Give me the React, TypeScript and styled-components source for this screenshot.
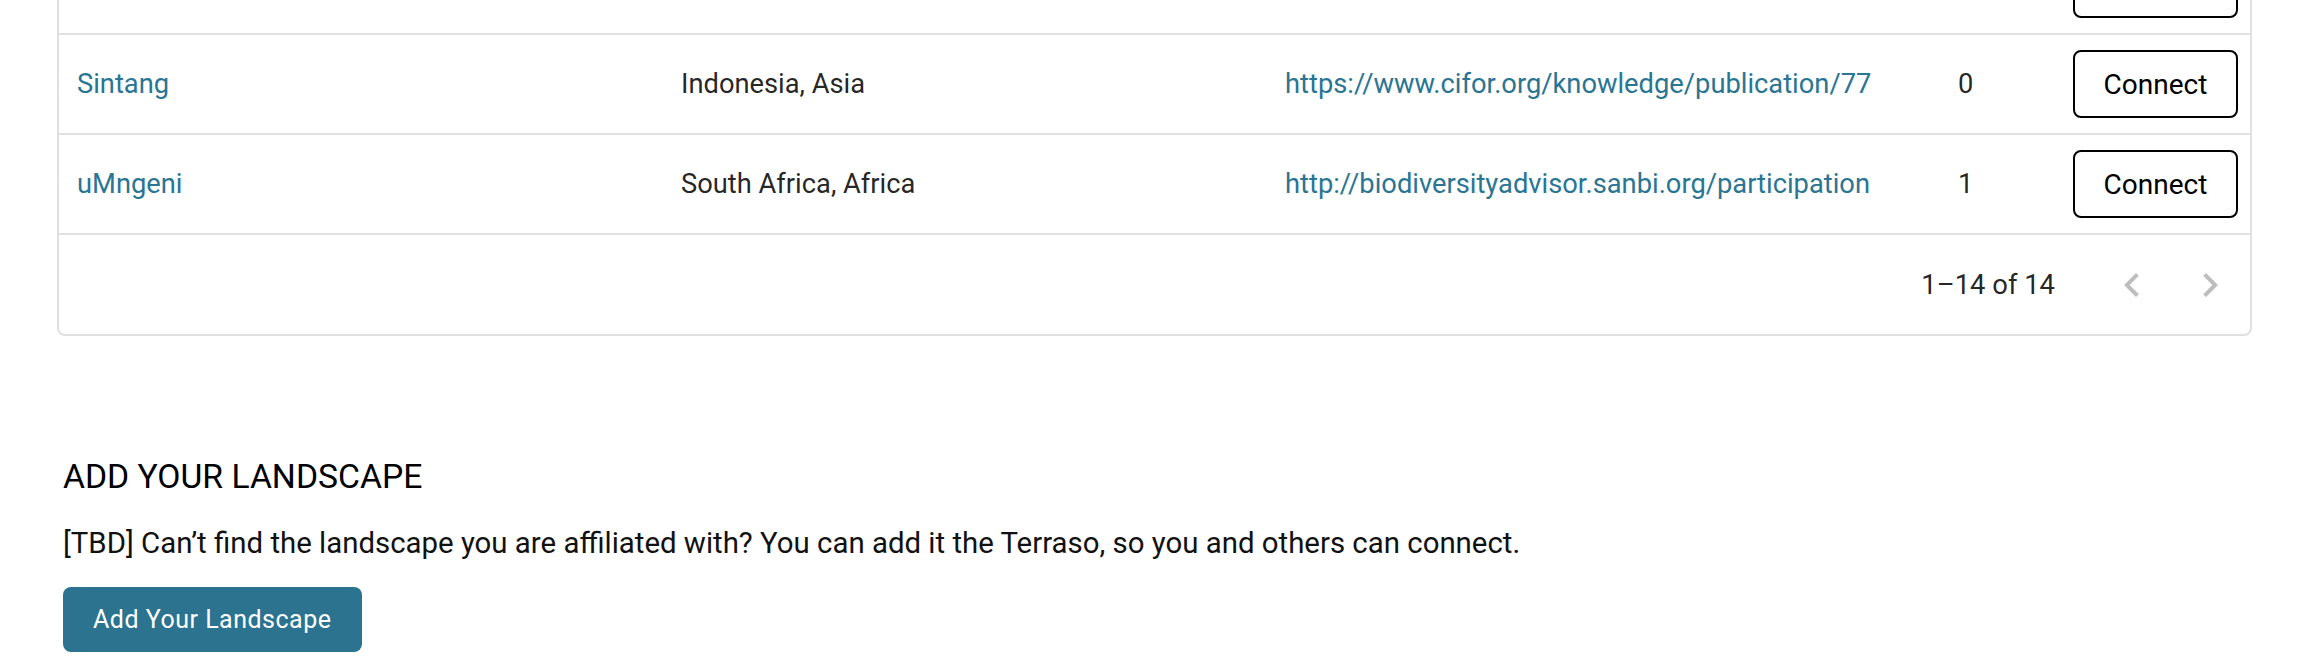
import React, {FC} from 'react';
import styled, {createGlobalStyle} from 'styled-components';

const GlobalStyle = createGlobalStyle`
  html, body {
    margin: 0;
    padding: 0;
    background: #fff;
  }
  body {
    font-family: Roboto, "Liberation Sans", sans-serif;
    color: rgba(0, 0, 0, 0.87);
    overflow: hidden;
  }
`;

interface LandscapeInterface {
  name: string;
  location: string;
  website: string;
  members: number;
}

const LANDSCAPES: LandscapeInterface[] = [
  {name: 'Montrouis', location: 'Haiti, North America', website: 'https://www.wri.org/', members: 2},
  {
    name: 'Sintang',
    location: 'Indonesia, Asia',
    website: 'https://www.cifor.org/knowledge/publication/77',
    members: 0
  },
  {
    name: 'uMngeni',
    location: 'South Africa, Africa',
    website: 'http://biodiversityadvisor.sanbi.org/participation',
    members: 1
  }
];

const Page = styled.div`
  padding: 0 56px 0 57px;
`;

// the list is scrolled: the row above "Sintang" only peeks in at the top edge
const Card = styled.div`
  margin-top: -67px;
  border: 2px solid #e0e0e0;
  border-radius: 8px;
  background: #fff;
`;

const Row = styled.div`
  display: grid;
  grid-template-columns: 604px 604px 673px 115px 1fr;
  align-items: center;
  box-sizing: border-box;
  height: 100px;
  border-bottom: 2px solid #e0e0e0;
`;

const Cell = styled.div`
  padding-left: 18px;
  font-size: 27.3px;
  line-height: 40px;
  white-space: nowrap;
  overflow: hidden;
`;

const Link = styled.a`
  color: #2a7593;
  text-decoration: none;
`;

const ConnectButton = styled.button`
  box-sizing: border-box;
  width: 165px;
  height: 68px;
  padding: 0;
  border: 2px solid #000;
  border-radius: 8px;
  background: #fff;
  color: #000;
  font-family: Roboto, "Liberation Sans", sans-serif;
  font-size: 28px;
  cursor: pointer;
`;

const Pagination = styled.div`
  display: flex;
  align-items: center;
  justify-content: flex-end;
  height: 99px;
  padding-right: 16px;
`;

const DisplayedRows = styled.span`
  font-size: 27.4px;
  line-height: 40px;
  color: rgba(0, 0, 0, 0.87);
  margin-right: 53px;
`;

const Actions = styled.div`
  display: flex;
  gap: 30px;
`;

const Chevron = styled.svg`
  display: block;
  width: 48px;
  height: 48px;
  fill: rgba(0, 0, 0, 0.26);
`;

const Section = styled.section`
  padding-left: 6px;
`;

const Heading = styled.h2`
  margin: 121px 0 0;
  font-size: 33.7px;
  line-height: 40px;
  font-weight: 400;
  color: #000;
`;

const Description = styled.p`
  margin: 26px 0 0;
  font-size: 29.4px;
  line-height: 40px;
  color: #111;
`;

const PrimaryButton = styled.button`
  margin-top: 24px;
  height: 65px;
  padding: 0 30px;
  border: none;
  border-radius: 8px;
  background: #2c7390;
  color: #fff;
  font-family: Roboto, "Liberation Sans", sans-serif;
  font-size: 25px;
  letter-spacing: 0.5px;
  cursor: pointer;
`;

const LandscapeRow: FC<{landscape: LandscapeInterface}> = ({landscape}) => (
  <Row>
    <Cell>
      <Link href="#">{landscape.name}</Link>
    </Cell>
    <Cell>{landscape.location}</Cell>
    <Cell>
      <Link href="#">{landscape.website}</Link>
    </Cell>
    <Cell>{landscape.members}</Cell>
    <Cell>
      <ConnectButton>Connect</ConnectButton>
    </Cell>
  </Row>
);

const App: FC = () => (
  <Page>
    <GlobalStyle />
    <Card>
      {LANDSCAPES.map((landscape) => (
        <LandscapeRow key={landscape.name} landscape={landscape} />
      ))}
      <Pagination>
        <DisplayedRows>1–14 of 14</DisplayedRows>
        <Actions>
          <Chevron viewBox="0 0 24 24">
            <path d="M15.41 16.59 10.83 12l4.58-4.59L14 6l-6 6 6 6 1.41-1.41z" />
          </Chevron>
          <Chevron viewBox="0 0 24 24">
            <path d="M8.59 16.59 13.17 12 8.59 7.41 10 6l6 6-6 6-1.41-1.41z" />
          </Chevron>
        </Actions>
      </Pagination>
    </Card>
    <Section>
      <Heading>ADD YOUR LANDSCAPE</Heading>
      <Description>
        [TBD] Can’t find the landscape you are affiliated with? You can add it the Terraso, so you
        and others can connect.
      </Description>
      <PrimaryButton>Add Your Landscape</PrimaryButton>
    </Section>
  </Page>
);

export default App;
